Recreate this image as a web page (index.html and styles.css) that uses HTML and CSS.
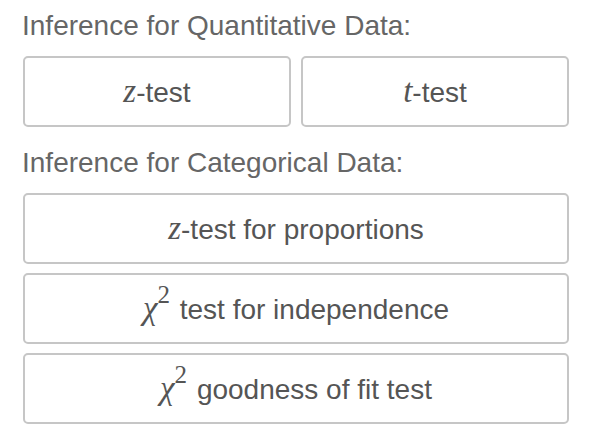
FILE: index.html
```html
<!DOCTYPE html>
<html lang="en">
<head>
  <meta charset="UTF-8">
  <meta name="viewport" content="width=device-width, initial-scale=1.0">
  <title>Inference Tests</title>
  <link rel="stylesheet" href="styles.css">
</head>
<body>
  <div class="container">
    <!-- Quantitative -->
    <h3 class="group-title">Inference for Quantitative Data:</h3>
    <div class="row">
      <button class="choice"><span class="math">z</span>-test</button>
      <button class="choice"><span class="math">t</span>-test</button>
    </div>

    <!-- Categorical -->
    <h3 class="group-title">Inference for Categorical Data:</h3>
    <div class="stack">
      <button class="choice"><span class="math">z</span>-test for proportions</button>
      <button class="choice"><span class="math">χ<sup>2</sup></span> test for independence</button>
      <button class="choice"><span class="math">χ<sup>2</sup></span> goodness of fit test</button>
    </div>
  </div>
</body>
</html>
```

FILE: styles.css
```css
body {
  font-family: Arial, "Liberation Sans", sans-serif;
  margin: 0;
  padding: 0;
  background-color: #fff;
  color: #666;
}
.container {
  width: 546px;
  padding: 10px 0 0 23px;
}
.group-title {
  margin: 0 0 14px -1px;
  font-size: 28px;
  line-height: 32px;
  font-weight: normal;
  color: #666;
}
.row {
  display: grid;
  grid-template-columns: 1fr 1fr;
  gap: 10px;
  margin-bottom: 20px;
}
.stack {
  display: flex;
  flex-direction: column;
  gap: 9px;
}
.choice {
  display: block;
  width: 100%;
  height: 71px;
  padding: 0;
  background: #fff;
  border: 2px solid #c6c6c6;
  border-radius: 5px;
  font-family: Arial, "Liberation Sans", sans-serif;
  font-size: 28px;
  line-height: 32px;
  color: #555;
  cursor: pointer;
}
.math {
  font-family: "Liberation Serif", "Times New Roman", serif;
  font-style: italic;
  font-size: 33px;
}
.math sup {
  font-style: normal;
  font-size: 25px;
  line-height: 0;
  vertical-align: 16px;
  margin-right: 2px;
}
```
